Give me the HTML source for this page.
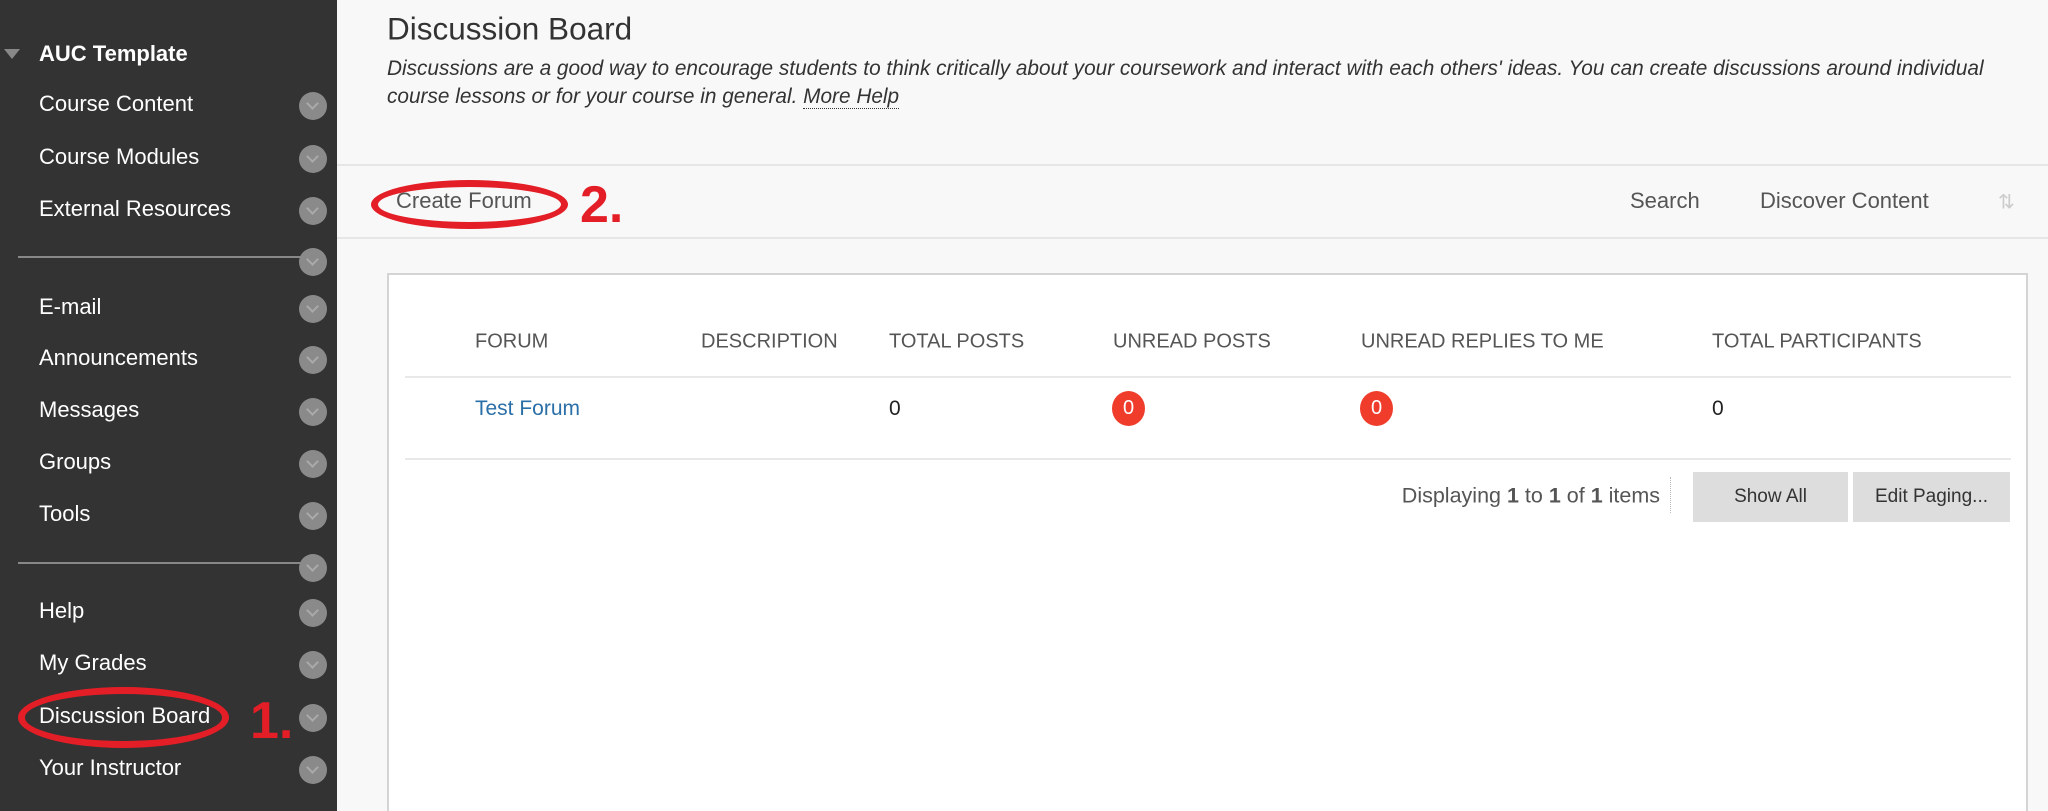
<!DOCTYPE html>
<html><head><meta charset="utf-8"><style>
*{margin:0;padding:0;box-sizing:border-box}
html,body{width:2048px;height:811px;overflow:hidden}
body{background:#f8f8f8;font-family:"Liberation Sans",sans-serif;position:relative}
.sb{position:absolute;left:0;top:0;width:337px;height:811px;background:#333}
.it{position:absolute;left:39px;color:#fff;font-size:22px;transform:translateY(-50%);white-space:nowrap}
.c{position:absolute;left:299px;width:28px;height:28px;border-radius:50%;background:#8a8a8a;transform:translateY(-50%)}
.c:after{content:"";position:absolute;left:9px;top:7px;width:7px;height:7px;border-right:2px solid #aaa;border-bottom:2px solid #aaa;transform:rotate(45deg)}
.ln{position:absolute;left:18px;width:285px;height:2px;background:#888}
.a{position:absolute;transform:translateY(-50%);white-space:nowrap}
.h{font-size:20px;color:#555}
.red{color:#e41e26;font-weight:bold;font-size:52px}
.ell{position:absolute;border:7px solid #e41e26;border-radius:50%}
</style></head><body>
<div class="sb"></div>
<div style="position:absolute;left:4px;top:49px;width:0;height:0;border-left:8px solid transparent;border-right:8px solid transparent;border-top:10px solid #888"></div>
<div class="it" style="top:54px;font-weight:bold">AUC Template</div>
<div class="it" style="top:104px">Course Content</div><div class="c" style="top:106px"></div>
<div class="it" style="top:157px">Course Modules</div><div class="c" style="top:159px"></div>
<div class="it" style="top:209px">External Resources</div><div class="c" style="top:211px"></div>
<div class="ln" style="top:256px"></div><div class="c" style="top:262px"></div>
<div class="it" style="top:307px">E-mail</div><div class="c" style="top:309px"></div>
<div class="it" style="top:358px">Announcements</div><div class="c" style="top:360px"></div>
<div class="it" style="top:410px">Messages</div><div class="c" style="top:412px"></div>
<div class="it" style="top:462px">Groups</div><div class="c" style="top:464px"></div>
<div class="it" style="top:514px">Tools</div><div class="c" style="top:516px"></div>
<div class="ln" style="top:562px"></div><div class="c" style="top:568px"></div>
<div class="it" style="top:611px">Help</div><div class="c" style="top:613px"></div>
<div class="it" style="top:663px">My Grades</div><div class="c" style="top:665px"></div>
<div class="it" style="top:716px">Discussion Board</div><div class="c" style="top:718px"></div>
<div class="it" style="top:768px">Your Instructor</div><div class="c" style="top:770px"></div>
<div class="ell" style="left:18px;top:687px;width:211px;height:61px"></div>
<div class="a red" style="left:250px;top:721px">1.</div>

<div class="a" style="left:387px;top:29px;font-size:31.5px;color:#333">Discussion Board</div>
<div style="position:absolute;left:387px;top:55px;width:1635px;font-size:20.8px;line-height:28px;font-style:italic;color:#333">Discussions are a good way to encourage students to think critically about your coursework and interact with each others' ideas. You can create discussions around individual course lessons or for your course in general. <span style="border-bottom:1px dotted #333">More Help</span></div>
<div style="position:absolute;left:337px;top:164px;width:1711px;height:2px;background:#e6e6e6"></div>
<div style="position:absolute;left:337px;top:237px;width:1711px;height:2px;background:#e6e6e6"></div>
<div class="a" style="left:396px;top:201px;font-size:22px;color:#555">Create Forum</div>
<div class="ell" style="left:371px;top:180px;width:197px;height:49px"></div>
<div class="a red" style="left:580px;top:205px">2.</div>
<div class="a" style="left:1630px;top:201px;font-size:22px;color:#555">Search</div>
<div class="a" style="left:1760px;top:201px;font-size:22px;color:#555">Discover Content</div>
<div class="a" style="left:1998px;top:202px;font-size:20px;color:#ccc">⇅</div>

<div style="position:absolute;left:387px;top:273px;width:1641px;height:560px;background:#fff;border:2px solid #d4d4d4"></div>
<div class="a h" style="left:475px;top:342px">FORUM</div>
<div class="a h" style="left:701px;top:342px">DESCRIPTION</div>
<div class="a h" style="left:889px;top:342px">TOTAL POSTS</div>
<div class="a h" style="left:1113px;top:342px">UNREAD POSTS</div>
<div class="a h" style="left:1361px;top:342px">UNREAD REPLIES TO ME</div>
<div class="a h" style="left:1712px;top:342px">TOTAL PARTICIPANTS</div>
<div style="position:absolute;left:405px;top:376px;width:1606px;height:2px;background:#e8e8e8"></div>
<div class="a" style="left:475px;top:409px;font-size:21px;color:#2a6fa8">Test Forum</div>
<div class="a" style="left:889px;top:409px;font-size:21px;color:#222">0</div>
<div style="position:absolute;left:1112px;top:391px;width:33px;height:35px;border-radius:50%;background:#f03c2b;color:#fff;font-size:20px;text-align:center;line-height:35px">0</div>
<div style="position:absolute;left:1360px;top:391px;width:33px;height:35px;border-radius:50%;background:#f03c2b;color:#fff;font-size:20px;text-align:center;line-height:35px">0</div>
<div class="a" style="left:1712px;top:409px;font-size:21px;color:#222">0</div>
<div style="position:absolute;left:405px;top:458px;width:1606px;height:2px;background:#e8e8e8"></div>
<div class="a" style="right:388px;top:496px;font-size:21.5px;color:#555">Displaying <b>1</b> to <b>1</b> of <b>1</b> items</div>
<div style="position:absolute;left:1670px;top:477px;height:36px;border-left:1px dotted #bbb"></div>
<div style="position:absolute;left:1693px;top:472px;width:155px;height:50px;background:#ddd;color:#333;font-size:19px;text-align:center;line-height:50px">Show All</div>
<div style="position:absolute;left:1853px;top:472px;width:157px;height:50px;background:#ddd;color:#333;font-size:19px;text-align:center;line-height:50px">Edit Paging...</div>
</body></html>
